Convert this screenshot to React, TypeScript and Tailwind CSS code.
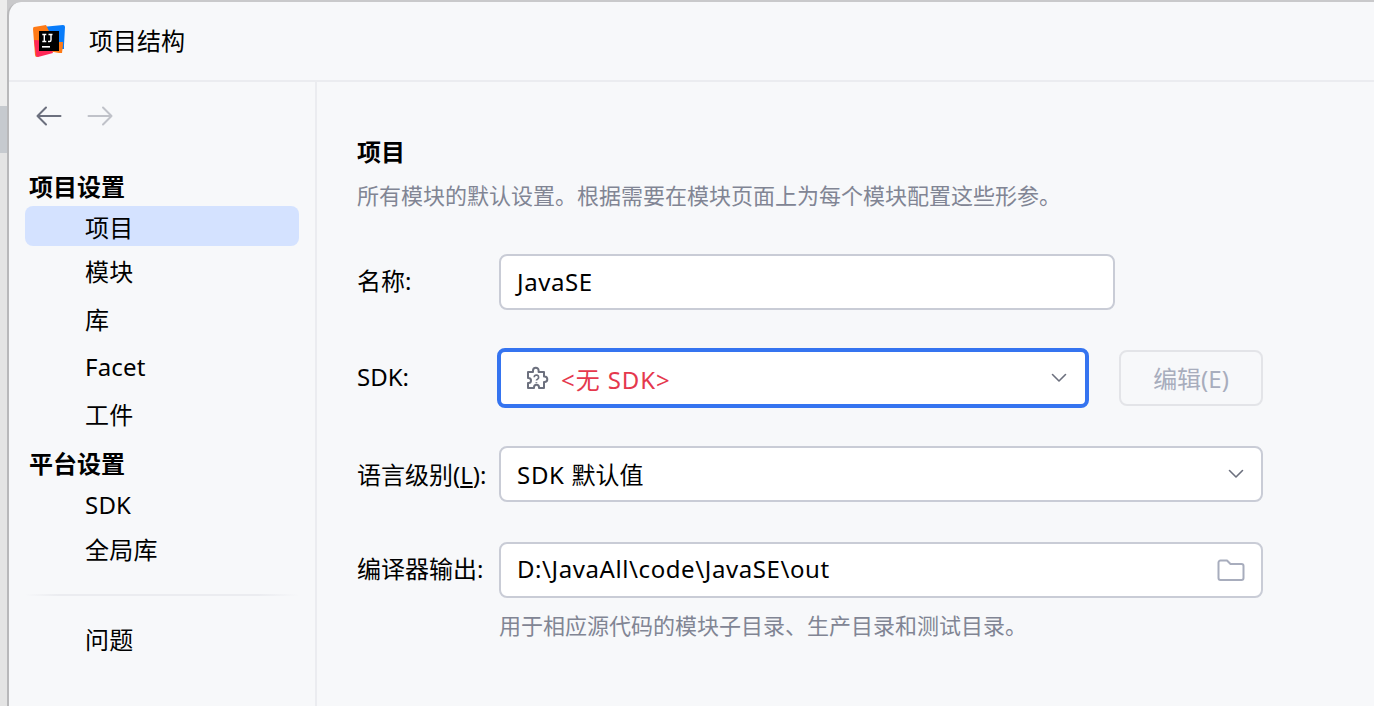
import React from "react";

const font = { fontFamily: '"Noto Sans","Noto Sans CJK SC",sans-serif' };

function Chevron() {
  return (
    <svg width="18" height="18" viewBox="0 0 18 18" fill="none" stroke="#6c707e" strokeWidth="1.6" strokeLinecap="round" strokeLinejoin="round">
      <path d="M2.5 5.5 9 12l6.5-6.5" />
    </svg>
  );
}

function Logo() {
  return (
    <svg width="32" height="32" viewBox="0 0 32 32">
      <path d="M9 2 L30 0 Q32 0 32 2 L31 20 L31 24 L12 24 Z" fill="#087cfa" />
      <path d="M15 26 L26 28 L29 28 Q30 22 30 17 L20 17 Z" fill="#fe7a16" />
      <path d="M1 2 L13 0 L18 10 L17 26 L4 32 Q2 32 2 30 L0 4 Q0 2 1 2 Z" fill="#fe7a16" />
      <path d="M1 15 L16 16 L20 28 L5 32 Q3 32 3 30 Z" fill="#fe2857" />
      <rect x="6" y="6" width="20" height="20" fill="#000" />
      <rect x="9" y="21" width="8" height="1.6" fill="#fff" />
      <path d="M9.3 9.5h4M11.3 9.5v7M9.3 16.5h4M15.5 9.5h4M18 9.5v5.5q0 1.5-1.5 1.5h-1.5" stroke="#fff" strokeWidth="1.4" fill="none" />
    </svg>
  );
}

function Puzzle() {
  return (
    <svg width="24" height="24" viewBox="0 0 24 24" fill="none" stroke="#6c707e" strokeWidth="2" strokeLinejoin="round">
      <path d="M3 6h5V4.5a2.8 2.8 0 0 1 5.6 0V6H19v4.5h.5a2.8 2.8 0 0 1 0 5.6H19V22h-5v-.8a2.5 2.5 0 0 0-5 0v.8H3v-5h.5a2.5 2.5 0 0 0 0-5H3Z" />
      <path d="M9.2 11.2a2.2 2.2 0 1 1 3.4 1.9c-.8.5-1.2.9-1.2 1.5" strokeWidth="1.7" />
      <path d="M11.4 16.2v1" strokeWidth="1.8" />
    </svg>
  );
}

function Folder() {
  return (
    <svg width="28" height="24" viewBox="0 0 28 24" fill="none" stroke="#a8adbd" strokeWidth="2" strokeLinejoin="round">
      <path d="M1.5 4.5a2 2 0 0 1 2-2h6.5l3.5 3.5h11a2 2 0 0 1 2 2v12a2 2 0 0 1-2 2h-21a2 2 0 0 1-2-2Z" />
    </svg>
  );
}

function ArrowLeft({ color }: { color: string }) {
  return (
    <svg width="26" height="20" viewBox="0 0 26 20" fill="none" stroke={color} strokeWidth="2" strokeLinecap="round" strokeLinejoin="round">
      <path d="M1.5 10h23M10 1.5 1.5 10l8.5 8.5" />
    </svg>
  );
}

function ArrowRight({ color }: { color: string }) {
  return (
    <svg width="26" height="20" viewBox="0 0 26 20" fill="none" stroke={color} strokeWidth="2" strokeLinecap="round" strokeLinejoin="round">
      <path d="M1.5 10h23M16 1.5l8.5 8.5-8.5 8.5" />
    </svg>
  );
}

function NavItem({ label, active, h }: { label: string; active?: boolean; h: string }) {
  return (
    <div className={`${h} ml-[16px] mr-[16px] pl-[60px] flex items-center rounded-[8px] text-[24px] leading-none text-black tracking-[0.2px] ${active ? "bg-[#d4e2ff] pt-[3px]" : "pb-[2px]"}`}>
      {label}
    </div>
  );
}

function Label({ children, className }: { children: React.ReactNode; className?: string }) {
  return <div className={`w-[142px] shrink-0 text-[24px] leading-none text-black whitespace-nowrap ${className ?? ""}`}>{children}</div>;
}

export default function App() {
  return (
    <div style={font} className="w-[1374px] h-[706px] overflow-hidden flex bg-[#c9c9cb]">
      <div className="w-[7px] shrink-0 flex flex-col">
        <div className="h-[106px] bg-[#ececec]" />
        <div className="h-[47px] bg-[#c6cacf]" />
        <div className="flex-1 bg-[#e4e4e4]" />
      </div>
      <div className="flex-1 mt-[2px] flex flex-col bg-[#f7f8fa] rounded-tl-[14px] border-l-2 border-[#b8b8ba]">
        <div className="h-[80px] shrink-0 flex items-center pl-[24px] border-b-2 border-[#ebecf0]">
          <Logo />
          <span className="ml-[24px] text-[24px] leading-none text-black">项目结构</span>
        </div>
        <div className="flex-1 flex">
          <aside className="w-[308px] shrink-0 border-r-2 border-[#ebecf0] flex flex-col">
            <div className="flex gap-[25px] pl-[27px] pt-[24px]">
              <ArrowLeft color="#6c707e" />
              <ArrowRight color="#c0c2c9" />
            </div>
            <div className="mt-[44px] pl-[20px] pb-[2px] h-[36px] flex items-center text-[24px] font-bold leading-none text-black">项目设置</div>
            <NavItem label="项目" active h="h-[40px]" />
            <div className="h-[3px]" />
            <NavItem label="模块" h="h-[48px]" />
            <NavItem label="库" h="h-[48px]" />
            <NavItem label="Facet" h="h-[46px]" />
            <NavItem label="工件" h="h-[50px]" />
            <div className="mt-[6px] pl-[20px] pb-[2px] h-[36px] flex items-center text-[24px] font-bold leading-none text-black">平台设置</div>
            <NavItem label="SDK" h="h-[46px]" />
            <NavItem label="全局库" h="h-[44px]" />
            <div className="mt-[21px] mx-[16px] h-[2px] bg-[linear-gradient(90deg,transparent,#ebecf0_12%,#ebecf0_85%,transparent)]" />
            <NavItem label="问题" h="h-[90px]" />
          </aside>
          <main className="flex-1 pl-[40px] pt-[54px]">
            <div className="text-[24px] font-bold leading-[32px] text-black">项目</div>
            <div className="mt-[12px] text-[22px] leading-[30px] text-[#818594] whitespace-nowrap">所有模块的默认设置。根据需要在模块页面上为每个模块配置这些形参。</div>
            <div className="mt-[44px] flex items-center h-[56px]">
              <Label className="pb-[2px]">名称:</Label>
              <div className="w-[616px] h-[56px] bg-white border-2 border-[#c9ccd6] rounded-[8px] flex items-center pl-[16px] text-[24px] text-black tracking-[0.6px]">JavaSE</div>
            </div>
            <div className="mt-[38px] flex items-center h-[60px]">
              <Label className="pb-[2px]">SDK:</Label>
              <div className="w-[592px] h-[60px] -ml-[2px] bg-white border-[4px] border-[#3574f0] rounded-[8px] flex items-center pl-[24px] pr-[17px]">
                <Puzzle />
                <span className="ml-[12px] pt-[3px] text-[24px] text-[#e5384d] tracking-[0.9px]">{"<无 SDK>"}</span>
                <span className="ml-auto flex"><Chevron /></span>
              </div>
              <div className="ml-[30px] pt-[1px] w-[144px] h-[56px] border-2 border-[#e3e4e8] rounded-[8px] flex items-center justify-center text-[24px] text-[#a8adbd]">编辑(E)</div>
            </div>
            <div className="mt-[38px] flex items-center h-[56px]">
              <Label className="pt-[2px]">语言级别(<span className="underline">L</span>):</Label>
              <div className="w-[764px] h-[56px] bg-white border-2 border-[#c9ccd6] rounded-[8px] flex items-center pl-[16px] pr-[16px] text-[24px] text-black">
                <span className="pt-[2px]"><span className="tracking-[0.7px]">SDK </span>默认值</span>
                <span className="ml-auto flex"><Chevron /></span>
              </div>
            </div>
            <div className="mt-[40px] flex items-center h-[56px]">
              <Label className="pb-[2px]">编译器输出:</Label>
              <div className="w-[764px] h-[56px] bg-white border-2 border-[#c9ccd6] rounded-[8px] flex items-center pl-[16px] pr-[16px] text-[24px] text-black">
                <span className="pb-[2px] tracking-[0.58px]">D:\JavaAll\code\JavaSE\out</span>
                <span className="ml-auto flex"><Folder /></span>
              </div>
            </div>
            <div className="mt-[12px] ml-[142px] text-[22px] leading-[30px] text-[#818594] whitespace-nowrap">用于相应源代码的模块子目录、生产目录和测试目录。</div>
          </main>
        </div>
      </div>
    </div>
  );
}
